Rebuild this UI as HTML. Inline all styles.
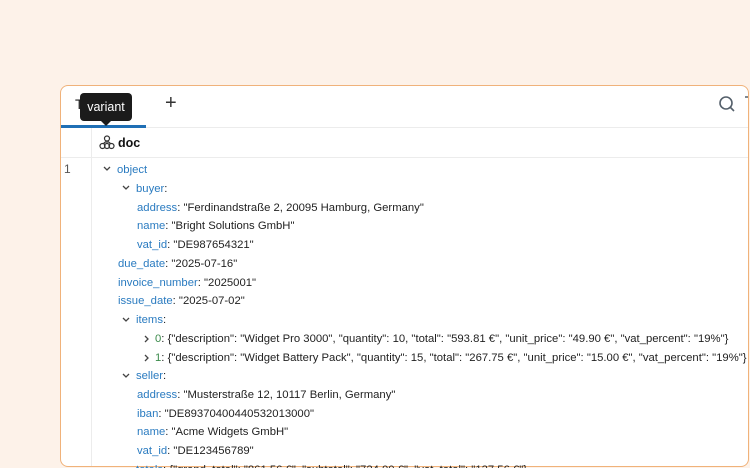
<!DOCTYPE html>
<html><head><meta charset="utf-8"><style>
*{margin:0;padding:0;box-sizing:border-box}
html,body{width:750px;height:468px;overflow:hidden}
body{background:#fdf2e9;font-family:"Liberation Sans",sans-serif;position:relative}
.card{position:absolute;left:60px;top:85px;width:689px;height:382px;background:#fff;border:1.5px solid #f0b27a;border-radius:8px;overflow:hidden}
.tabbar{position:absolute;left:0;top:0;right:0;height:42px;border-bottom:1px solid #ececec}
.tab{position:absolute;left:0;top:0;width:85px;height:42px;border-bottom:3px solid #1f6fb5}
.tab span{position:absolute;left:14px;top:10px;font-size:14px;color:#222}
.plus{position:absolute;left:104px;top:6px;font-size:20px;color:#333}
.hdr{position:absolute;left:0;top:42px;right:0;height:30px;border-bottom:1px solid #ececec}
.gut{position:absolute;left:30px;top:42px;bottom:0;border-left:1px solid #ececec}
.doc{position:absolute;left:57px;top:50px;font-size:12.5px;font-weight:bold;color:#111}
.ln{position:absolute;left:3px;top:76px;font-size:12px;color:#555}
.clip{position:absolute;left:0;top:0;width:750px;height:468px;overflow:hidden}
.row{position:absolute;font-size:11.3px;color:#222;white-space:nowrap;line-height:16px}
.k{color:#2a7bc0}.n{color:#3a8a4a}
.tip{position:absolute;left:80px;top:93px;width:52px;height:28px;background:#1b1b1b;border-radius:4px;color:#fff;font-size:12.5px;line-height:28px;text-align:center}
.tip:after{content:"";position:absolute;left:21px;bottom:-5px;border:5px solid transparent;border-bottom:0;border-top-color:#1b1b1b}
svg.d,svg.r{position:absolute}
</style></head><body>
<div class="card">
<div class="tabbar"><div class="tab"><span>T</span></div><div class="plus">+</div>
<svg style="position:absolute;left:657px;top:9px" width="18" height="18" viewBox="0 0 18 18" fill="none" stroke="#55606b" stroke-width="1.6"><circle cx="8" cy="8" r="6"/><path d="M12.5 12.5L16 16"/></svg>
<svg style="position:absolute;left:683px;top:10px" width="10" height="12" viewBox="0 0 10 12" fill="none" stroke="#55606b" stroke-width="1.5"><path d="M1 1h8L6 5v5"/></svg>
</div>
<div class="hdr"></div><div class="gut"></div>
<svg style="position:absolute;left:38px;top:49px" width="16" height="15" viewBox="0 0 16 15" fill="none" stroke="#333" stroke-width="1.2"><circle cx="8" cy="3.5" r="2.5"/><circle cx="3.5" cy="11" r="2.5"/><circle cx="8" cy="11" r="2.5"/><circle cx="12.5" cy="11" r="2.5"/><path d="M8 6v2.5M4.5 8.5l2.5-2M11.5 8.5l-2.5-2"/></svg>
<div class="doc">doc</div>
<div class="ln">1</div>
</div>
<div class="clip">
<svg class="d" style="left:103px;top:166px" width="8" height="6" viewBox="0 0 8 6" fill="none" stroke="#444" stroke-width="1.3"><path d="M1 1l3 3 3-3"/></svg>
<div class="row" style="left:117px;top:162px"><span class="k">object</span></div>
<svg class="d" style="left:122px;top:185px" width="8" height="6" viewBox="0 0 8 6" fill="none" stroke="#444" stroke-width="1.3"><path d="M1 1l3 3 3-3"/></svg>
<div class="row" style="left:136px;top:181px"><span class="k">buyer</span>:</div>
<div class="row" style="left:137px;top:200px"><span class="k">address</span>: "Ferdinandstraße 2, 20095 Hamburg, Germany"</div>
<div class="row" style="left:137px;top:218px"><span class="k">name</span>: "Bright Solutions GmbH"</div>
<div class="row" style="left:137px;top:237px"><span class="k">vat_id</span>: "DE987654321"</div>
<div class="row" style="left:118px;top:256px"><span class="k">due_date</span>: "2025-07-16"</div>
<div class="row" style="left:118px;top:275px"><span class="k">invoice_number</span>: "2025001"</div>
<div class="row" style="left:118px;top:293px"><span class="k">issue_date</span>: "2025-07-02"</div>
<svg class="d" style="left:122px;top:317px" width="8" height="6" viewBox="0 0 8 6" fill="none" stroke="#444" stroke-width="1.3"><path d="M1 1l3 3 3-3"/></svg>
<div class="row" style="left:136px;top:312px"><span class="k">items</span>:</div>
<svg class="r" style="left:144px;top:335px" width="6" height="8" viewBox="0 0 6 8" fill="none" stroke="#444" stroke-width="1.3"><path d="M1 1l3 3-3 3"/></svg>
<div class="row" style="left:155px;top:331px"><span class="n">0</span>: {"description": "Widget Pro 3000", "quantity": 10, "total": "593.81 €", "unit_price": "49.90 €", "vat_percent": "19%"}</div>
<svg class="r" style="left:144px;top:354px" width="6" height="8" viewBox="0 0 6 8" fill="none" stroke="#444" stroke-width="1.3"><path d="M1 1l3 3-3 3"/></svg>
<div class="row" style="left:155px;top:350px"><span class="n">1</span>: {"description": "Widget Battery Pack", "quantity": 15, "total": "267.75 €", "unit_price": "15.00 €", "vat_percent": "19%"}</div>
<svg class="d" style="left:122px;top:373px" width="8" height="6" viewBox="0 0 8 6" fill="none" stroke="#444" stroke-width="1.3"><path d="M1 1l3 3 3-3"/></svg>
<div class="row" style="left:136px;top:368px"><span class="k">seller</span>:</div>
<div class="row" style="left:137px;top:387px"><span class="k">address</span>: "Musterstraße 12, 10117 Berlin, Germany"</div>
<div class="row" style="left:137px;top:406px"><span class="k">iban</span>: "DE89370400440532013000"</div>
<div class="row" style="left:137px;top:424px"><span class="k">name</span>: "Acme Widgets GmbH"</div>
<div class="row" style="left:137px;top:443px"><span class="k">vat_id</span>: "DE123456789"</div>
<div class="row" style="left:136px;top:462px"><span class="k">totals</span>: {"grand_total": "861.56 €", "subtotal": "724.00 €", "vat_total": "137.56 €"}</div>
</div>
<div class="tip">variant</div>
</body></html>
